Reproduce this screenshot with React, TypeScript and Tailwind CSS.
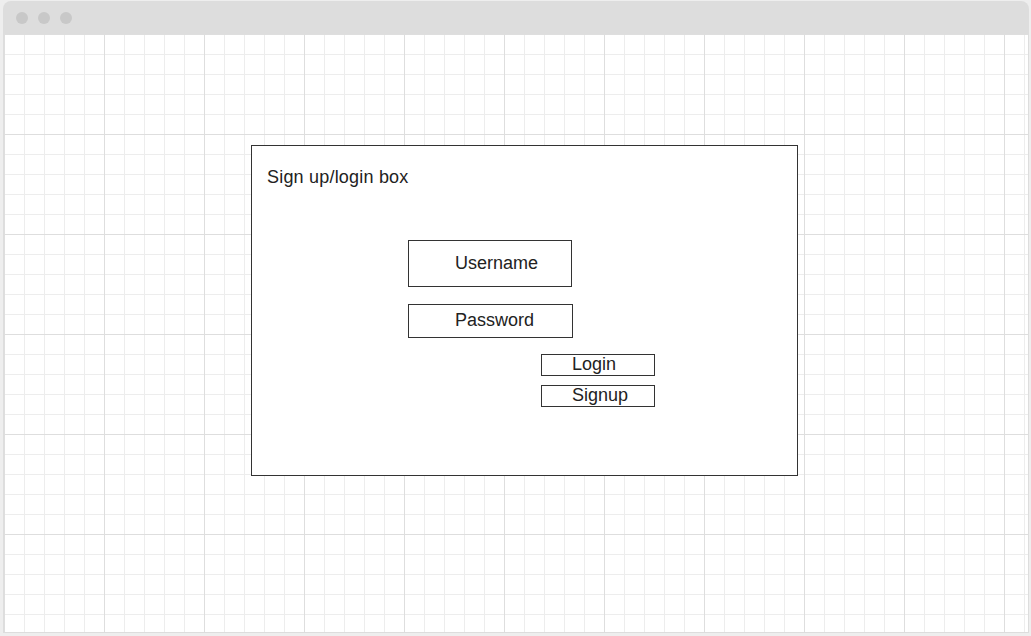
export default function App() {
  return (
    <div className="w-[1031px] h-[636px] bg-[#eeeeee] pt-[1px] pl-[3px] pr-[2px] pb-[3px] font-['Liberation_Sans',Arial,sans-serif] text-[#222222] overflow-hidden">
      <div className="w-[1026px] h-[632px] flex flex-col">
        <div className="h-[33px] shrink-0 bg-[#dddddd] rounded-t-[8px] flex items-center gap-[10px] pl-[13px]">
          <div className="w-[12px] h-[12px] rounded-full bg-[#c8c8c8]" />
          <div className="w-[12px] h-[12px] rounded-full bg-[#c8c8c8]" />
          <div className="w-[12px] h-[12px] rounded-full bg-[#c8c8c8]" />
        </div>
        <div className="flex-1 border-x border-b border-[#dddddd] bg-white bg-[linear-gradient(to_right,#dedede_1px,transparent_1px),linear-gradient(to_bottom,#dedede_1px,transparent_1px),linear-gradient(to_right,#ededed_1px,transparent_1px),linear-gradient(to_bottom,#ededed_1px,transparent_1px)] bg-[size:100px_100px,100px_100px,20px_20px,20px_20px] pt-[111px] pl-[247px]">
          <div className="w-[547px] h-[331px] border border-[#333333] bg-white flex flex-col items-start">
            <div className="mt-[21px] ml-[15px] text-[18px] leading-[20px] tracking-[0.2px]">Sign up/login box</div>
            <div className="mt-[53px] ml-[156px] w-[164px] h-[47px] border border-[#333333] pl-[46px] pt-[12px] text-[18px] leading-[20px]">Username</div>
            <div className="mt-[17px] ml-[156px] w-[165px] h-[34px] border border-[#333333] pl-[46px] pt-[5px] text-[18px] leading-[20px]">Password</div>
            <div className="mt-[16px] ml-[289px] w-[114px] h-[22px] border border-[#333333] pl-[30px] pt-[1px] text-[18px] leading-[16px]">Login</div>
            <div className="mt-[9px] ml-[289px] w-[114px] h-[22px] border border-[#333333] pl-[30px] pt-[1px] text-[18px] leading-[16px]">Signup</div>
          </div>
        </div>
      </div>
    </div>
  );
}
